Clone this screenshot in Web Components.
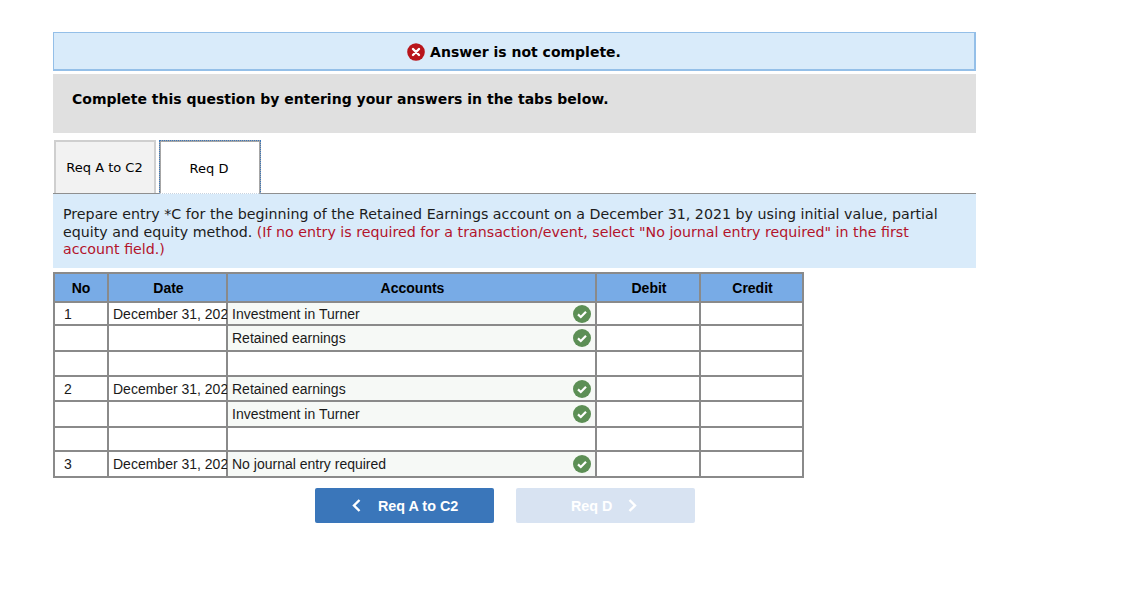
<!DOCTYPE html>
<html>
<head>
<meta charset="utf-8">
<title>Answer</title>
<style>
    html, body { margin: 0; padding: 0; background: #fff; }
    body { font-family: "DejaVu Sans", Verdana, sans-serif; color: #000; }
</style>
</head>
<body>
<question-page>
    <answer-banner>Answer is not complete.</answer-banner>
    <question-note>Complete this question by entering your answers in the tabs below.</question-note>
    <req-tabs></req-tabs>
    <question-text>
        Prepare entry *C for the beginning of the Retained Earnings account on a December 31, 2021 by using initial value, partial equity and equity method. <span style="color:#b3132b">(If no entry is required for a transaction/event, select "No journal entry required" in the first account field.)</span>
    </question-text>
    <journal-table></journal-table>
    <nav-buttons></nav-buttons>
</question-page>

<script>
class QuestionPage extends HTMLElement {
    constructor() {
        super();
        this.attachShadow({ mode: 'open' });
        this.shadowRoot.innerHTML = `
            <style>
                :host {
                    display: flex;
                    flex-direction: column;
                    width: 923px;
                    padding: 32px 0 0 53px;
                }
            </style>
            <slot></slot>
        `;
    }
}

class AnswerBanner extends HTMLElement {
    constructor() {
        super();
        this.attachShadow({ mode: 'open' });
        this.shadowRoot.innerHTML = `
            <style>
                :host {
                    display: flex;
                    justify-content: center;
                    align-items: center;
                    gap: 5px;
                    box-sizing: border-box;
                    height: 39px;
                    padding-top: 1px;
                    background: #d9ebfa;
                    border: 2px solid #94bfe8;
                    border-width: 1px 2px 2px 1px;
                    font-size: 14px;
                    font-weight: bold;
                }
                svg { display: block; }
            </style>
            <svg width="18" height="18" viewBox="0 0 18 18">
                <circle cx="9" cy="9" r="8.8" fill="#b9151b"/>
                <path d="M6 6l6 6M12 6l-6 6" stroke="#fff" stroke-width="2.4" stroke-linecap="round"/>
            </svg>
            <span><slot></slot></span>
        `;
    }
}

class QuestionNote extends HTMLElement {
    constructor() {
        super();
        this.attachShadow({ mode: 'open' });
        this.shadowRoot.innerHTML = `
            <style>
                :host {
                    display: block;
                    box-sizing: border-box;
                    height: 59px;
                    margin-top: 3px;
                    padding: 16px 0 0 19px;
                    background: #e0e0e0;
                    font-size: 14px;
                    line-height: 18px;
                    font-weight: bold;
                }
            </style>
            <slot></slot>
        `;
    }
}

class ReqTabs extends HTMLElement {
    constructor() {
        super();
        this.attachShadow({ mode: 'open' });
        this.shadowRoot.innerHTML = `
            <style>
                :host {
                    display: flex;
                    align-items: flex-end;
                    gap: 3px;
                    box-sizing: border-box;
                    height: 54px;
                    margin-top: 7px;
                    padding-left: 1px;
                    border-bottom: 1px solid #8f8f8f;
                    font-size: 13px;
                }
                .tab {
                    display: flex;
                    justify-content: center;
                    align-items: center;
                    box-sizing: border-box;
                }
                .off {
                    width: 102px;
                    height: 53px;
                    padding-right: 1px;
                    background: #f2f2f2;
                    border: 2px solid #cfcfcf;
                    border-bottom: 0;
                }
                .on {
                    position: relative;
                    width: 102px;
                    height: 54px;
                    margin-bottom: -1px;
                    padding-right: 2px;
                    background: #fff;
                    border: 2px solid #a6a6a6;
                    border-bottom: 0;
                }
                /* dotted focus ring over the grey tab border */
                .on::after {
                    content: "";
                    position: absolute;
                    inset: -2px -2px 0 -2px;
                    border: 1px dotted #3a76ba;
                    border-bottom-color: #c9d4e0;
                }
            </style>
            <div class="tab off">Req A to C2</div>
            <div class="tab on">Req D</div>
        `;
    }
}

class QuestionText extends HTMLElement {
    constructor() {
        super();
        this.attachShadow({ mode: 'open' });
        this.shadowRoot.innerHTML = `
            <style>
                :host {
                    display: block;
                    box-sizing: border-box;
                    height: 74px;
                    padding: 12px 30px 0 10px;
                    background: #d9ebfa;
                    font-size: 14.23px;
                    line-height: 17.5px;
                    color: #1c1c1c;
                }
            </style>
            <slot></slot>
        `;
    }
}

class JournalTable extends HTMLElement {
    constructor() {
        super();
        this.attachShadow({ mode: 'open' });
        const check = `<svg class="ok" width="18" height="18" viewBox="0 0 18 18"><circle cx="9" cy="9" r="9" fill="#5c8f55"/><path d="M5 9.4l2.8 2.6L13 6.8" fill="none" stroke="#fff" stroke-width="2.2"/></svg>`;
        // no, date, account, row height
        const rows = [
            ["1", "December 31, 2021", "Investment in Turner", 23],
            ["", "", "Retained earnings", 26],
            ["", "", "", 25],
            ["2", "December 31, 2021", "Retained earnings", 25],
            ["", "", "Investment in Turner", 26],
            ["", "", "", 24],
            ["3", "December 31, 2021", "No journal entry required", 26]
        ];
        const body = rows.map(r => `
            <tr style="height:${r[3]}px">
                <td class="no">${r[0]}</td>
                <td><div class="date">${r[1]}</div></td>
                <td class="${r[2] ? 'acct' : ''}">${r[2] ? `<div class="cell"><span>${r[2]}</span>${check}</div>` : ''}</td>
                <td></td>
                <td></td>
            </tr>`).join("");
        this.shadowRoot.innerHTML = `
            <style>
                :host {
                    display: block;
                    width: 750px;
                    margin-top: 4px;
                    font-family: "Liberation Sans", Arial, sans-serif;
                    font-size: 14px;
                    color: #1a1a1a;
                }
                table {
                    width: 749px;
                    table-layout: fixed;
                    border-collapse: collapse;
                    border: 2px solid #8a8a8a;
                }
                th, td {
                    box-sizing: border-box;
                    padding: 0;
                    border: 2px solid #8a8a8a;
                    vertical-align: middle;
                }
                th {
                    height: 29px;
                    background: #78abe6;
                    font-weight: bold;
                    color: #000;
                }
                th + th { padding-left: 2px; }
                td.no { padding-left: 9px; }
                .date {
                    width: 114px;
                    padding-left: 4px;
                    overflow: hidden;
                    white-space: nowrap;
                }
                .acct { background: #f6f9f6; }
                .cell {
                    display: flex;
                    justify-content: space-between;
                    align-items: center;
                    padding: 0 4px 0 4px;
                }
                .ok { display: block; }
            </style>
            <table>
                <colgroup>
                    <col style="width:54px"><col style="width:119px"><col style="width:369px"><col style="width:104px"><col style="width:103px">
                </colgroup>
                <tr>
                    <th>No</th><th>Date</th><th>Accounts</th><th>Debit</th><th>Credit</th>
                </tr>
                ${body}
            </table>
        `;
    }
}

class NavButtons extends HTMLElement {
    constructor() {
        super();
        this.attachShadow({ mode: 'open' });
        this.shadowRoot.innerHTML = `
            <style>
                :host {
                    display: flex;
                    gap: 22px;
                    margin-top: 10px;
                    padding-left: 262px;
                    font-family: "Liberation Sans", Arial, sans-serif;
                    font-size: 14.35px;
                    font-weight: bold;
                    color: #fff;
                }
                .btn {
                    display: flex;
                    align-items: center;
                    box-sizing: border-box;
                    width: 179px;
                    height: 35px;
                    border-radius: 2px;
                }
                .prev { background: #3a76ba; padding-left: 37px; gap: 17px; }
                .next { background: #d8e3f2; padding-left: 55px; gap: 16px; }
                svg { display: block; }
            </style>
            <div class="btn prev">
                <svg width="9" height="13" viewBox="0 0 9 13"><path d="M7.5 1L2 6.5l5.5 5.5" fill="none" stroke="#fff" stroke-width="2.4"/></svg>
                <span>Req A to C2</span>
            </div>
            <div class="btn next">
                <span>Req D</span>
                <svg width="9" height="13" viewBox="0 0 9 13"><path d="M1.5 1L7 6.5 1.5 12" fill="none" stroke="#fff" stroke-width="2.4"/></svg>
            </div>
        `;
    }
}

customElements.define('question-page', QuestionPage);
customElements.define('answer-banner', AnswerBanner);
customElements.define('question-note', QuestionNote);
customElements.define('req-tabs', ReqTabs);
customElements.define('question-text', QuestionText);
customElements.define('journal-table', JournalTable);
customElements.define('nav-buttons', NavButtons);
</script>
</body>
</html>
